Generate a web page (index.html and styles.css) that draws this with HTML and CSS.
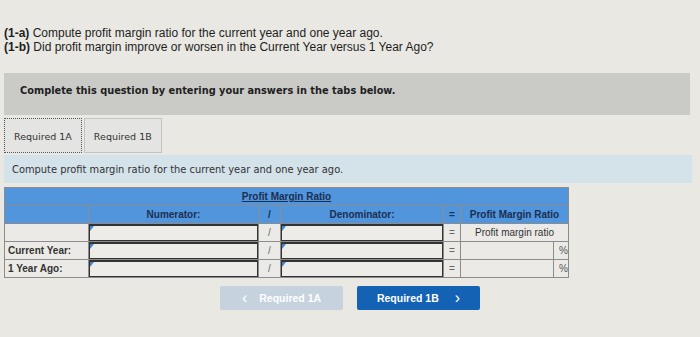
FILE: index.html
```html
<!DOCTYPE html>
<html>
<head>
    <title>Profit Margin Ratio</title>
    <link rel="stylesheet" href="styles.css">
</head>
<body>
    <div class="question">
        <p><b>(1-a)</b> Compute profit margin ratio for the current year and one year ago.</p>
        <p><b>(1-b)</b> Did profit margin improve or worsen in the Current Year versus 1 Year Ago?</p>
    </div>

    <div class="notice">Complete this question by entering your answers in the tabs below.</div>

    <div class="tabs">
        <div class="tab active">Required 1A</div>
        <div class="tab">Required 1B</div>
    </div>

    <div class="prompt">Compute profit margin ratio for the current year and one year ago.</div>

    <table class="ratio">
        <colgroup>
            <col class="w-label">
            <col class="w-num">
            <col class="w-op">
            <col class="w-den">
            <col class="w-eq">
            <col class="w-res">
            <col class="w-pct">
        </colgroup>
        <tr class="head">
            <th colspan="7"><u>Profit Margin Ratio</u></th>
        </tr>
        <tr class="head">
            <th></th>
            <th>Numerator:</th>
            <th>/</th>
            <th>Denominator:</th>
            <th>=</th>
            <th colspan="2">Profit Margin Ratio</th>
        </tr>
        <tr>
            <td class="label"></td>
            <td class="entry"><div class="field"></div></td>
            <td class="op">/</td>
            <td class="entry"><div class="field"></div></td>
            <td class="op">=</td>
            <td class="note" colspan="2">Profit margin ratio</td>
        </tr>
        <tr>
            <td class="label">Current Year:</td>
            <td class="entry"><div class="field"></div></td>
            <td class="op">/</td>
            <td class="entry"><div class="field"></div></td>
            <td class="op">=</td>
            <td></td>
            <td class="pct">%</td>
        </tr>
        <tr>
            <td class="label">1 Year Ago:</td>
            <td class="entry"><div class="field"></div></td>
            <td class="op">/</td>
            <td class="entry"><div class="field"></div></td>
            <td class="op">=</td>
            <td></td>
            <td class="pct">%</td>
        </tr>
    </table>

    <div class="nav">
        <button class="prev" disabled><span class="chev">&lsaquo;</span>Required 1A</button>
        <button class="next">Required 1B<span class="chev after">&rsaquo;</span></button>
    </div>
</body>
</html>
```

FILE: styles.css
```css
body {
    margin: 0;
    padding: 26px 10px 0 4px;
    background-color: #e9e8e3;
    color: #1e1e1e;
    font-family: 'Liberation Sans', Arial, sans-serif;
}

.question p {
    margin: 0;
    font-size: 12px;
    line-height: 14px;
}

.notice {
    margin-top: 19px;
    width: 670px;
    height: 42px;
    padding-left: 16px;
    line-height: 36px;
    background-color: #cacac7;
    font-family: 'DejaVu Sans', Verdana, sans-serif;
    font-size: 9.8px;
    font-weight: bold;
}

.tabs {
    display: flex;
    margin-top: 3px;
    gap: 2px;
}

.tab {
    height: 33px;
    padding: 0 9px;
    line-height: 35px;
    background-color: #e4e4e2;
    border: 1px solid #c4c4c2;
    font-family: 'DejaVu Sans', Verdana, sans-serif;
    font-size: 9.5px;
    color: #333;
}

.tab.active {
    border: 1px dotted #555;
}

.prompt {
    margin-top: 2px;
    width: 680px;
    height: 28px;
    padding-left: 8px;
    line-height: 29px;
    background-color: #d4e2ea;
    font-family: 'DejaVu Sans', Verdana, sans-serif;
    font-size: 9.9px;
    color: #333;
}

.ratio {
    margin-top: 4px;
    width: 564px;
    table-layout: fixed;
    border-collapse: collapse;
    font-size: 10px;
}

.w-label { width: 84px; }
.w-num { width: 170px; }
.w-op { width: 22px; }
.w-den { width: 163px; }
.w-eq { width: 17px; }
.w-res { width: 93px; }
.w-pct { width: 15px; }

.ratio td,
.ratio th {
    height: 17px;
    padding: 0;
    border: 1px solid #8c8c8c;
}

.ratio th {
    background-color: #5195dc;
    color: #1b2f52;
    font-weight: bold;
}

.ratio td {
    background-color: #ebeae6;
}

.ratio .label {
    padding-left: 3px;
    font-weight: bold;
    color: #333;
}

.ratio .op {
    text-align: center;
    color: #666;
}

.ratio .pct {
    text-align: right;
    color: #555;
}

.ratio .note {
    text-align: center;
    color: #333;
}

/* entry cells: dark outline with a small blue marker at the corner */
.field {
    position: relative;
    box-sizing: border-box;
    height: 17px;
    border: 1px solid #333;
    border-top-width: 2px;
    background-color: #edece8;
}

.field::before {
    content: "";
    position: absolute;
    top: 0;
    left: 0;
    border-top: 5px solid #3f84d0;
    border-right: 4px solid transparent;
}

.nav {
    display: flex;
    gap: 14px;
    margin: 8px 0 0 216px;
}

.nav button {
    display: flex;
    align-items: center;
    justify-content: center;
    width: 123px;
    height: 24px;
    border: none;
    border-radius: 2px;
    font-family: 'Liberation Sans', Arial, sans-serif;
    font-size: 10.5px;
    font-weight: bold;
    color: #fff;
}

.chev {
    margin-right: 12px;
    font-size: 16px;
    font-weight: normal;
    line-height: 1;
}

.chev.after {
    margin: 0 0 0 16px;
}

.prev {
    background-color: #c6d3de;
    color: #e4eaf0;
}

.next {
    background-color: #1462b4;
}
```
